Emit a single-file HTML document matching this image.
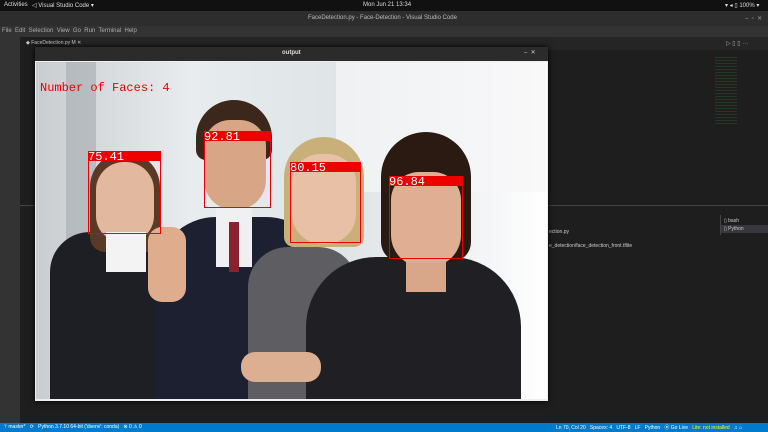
<!DOCTYPE html>
<html><head><style>
*{margin:0;padding:0;box-sizing:border-box}
body{width:768px;height:432px;overflow:hidden;background:#1e1e1e;font-family:"Liberation Sans",sans-serif;position:relative}
.a{position:absolute}
.t{font-size:6px;color:#ccc;white-space:nowrap}
.box{position:absolute;border:1.5px solid #e00}
.lab{position:absolute;left:-1px;top:-1px;right:-1px;height:10px;background:#e00;color:#fff;font-size:12px;line-height:12px;font-family:"Liberation Mono",monospace;padding-left:0}
</style></head><body>
<div class="a" style="left:0;top:0;width:768px;height:11px;background:#111"></div>
<div class="a t" style="left:4px;top:2px;color:#ddd">Activities</div>
<div class="a t" style="left:32px;top:2px;color:#ddd">◁ Visual Studio Code ▾</div>
<div class="a t" style="left:363px;top:2px;color:#ddd">Mon Jun 21 13:34</div>
<div class="a t" style="left:725px;top:2px;color:#ddd">▾ ◂ ▯ 100% ▾</div>
<div class="a" style="left:0;top:11px;width:768px;height:15px;background:#2d2d2d"></div>
<div class="a t" style="left:308px;top:15px;color:#bbb">FaceDetection.py - Face-Detection - Visual Studio Code</div>
<div class="a t" style="left:745px;top:15px;color:#999">–&nbsp;&nbsp;▫&nbsp;&nbsp;✕</div>
<div class="a" style="left:0;top:26px;width:768px;height:11px;background:#333"></div>
<div class="a t" style="left:2px;top:28px;color:#aaa">File&nbsp; Edit&nbsp; Selection&nbsp; View&nbsp; Go&nbsp; Run&nbsp; Terminal&nbsp; Help</div>
<div class="a" style="left:0;top:37px;width:20px;height:386px;background:#333"></div>
<div class="a" style="left:20px;top:37px;width:748px;height:13px;background:#252526"></div>
<div class="a" style="left:20px;top:37px;width:50px;height:13px;background:#1e1e1e"></div>
<div class="a t" style="left:26px;top:40px;font-size:5px">◆ FaceDetection.py M ✕</div>
<div class="a t" style="left:726px;top:40px;color:#aaa">▷ ▯ ▯ ···</div>
<div class="a" style="left:20px;top:205px;width:748px;height:1px;background:#444"></div>
<div class="a" style="left:720px;top:215px;width:48px;height:20px;border-left:1px solid #444"></div>
<div class="a t" style="left:724px;top:218px;font-size:5px">▯ bash</div>
<div class="a" style="left:721px;top:225px;width:47px;height:8px;background:#37373d"></div>
<div class="a t" style="left:724px;top:226px;font-size:5px">▯ Python</div>
<div class="a t" style="left:549px;top:229px;font-size:5px">ection.py</div>
<div class="a t" style="left:549px;top:243px;font-size:5px">e_detection/face_detection_front.tflite</div>
<div class="a" style="left:715px;top:55px;width:22px;height:70px;background:repeating-linear-gradient(#1e1e1e 0 2px,#2a4a2a 2px 3px);opacity:.6"></div>
<div class="a" style="left:0;top:423px;width:768px;height:9px;background:#007acc"></div>
<div class="a t" style="left:4px;top:424px;color:#fff;font-size:5px">ᛘ master*&nbsp;&nbsp;&nbsp;⟳&nbsp;&nbsp;&nbsp;Python 3.7.10 64-bit ('dsenv': conda)&nbsp;&nbsp;&nbsp;⊗ 0 ⚠ 0</div>
<div class="a t" style="left:556px;top:424px;color:#fff;font-size:5px">Ln 70, Col 20&nbsp;&nbsp;&nbsp;Spaces: 4&nbsp;&nbsp;&nbsp;UTF-8&nbsp;&nbsp;&nbsp;LF&nbsp;&nbsp;&nbsp;Python&nbsp;&nbsp;&nbsp;⦿ Go Live&nbsp;&nbsp;&nbsp;<span style="color:#ff0">Lite: not installed</span>&nbsp;&nbsp;&nbsp;♫ ⌂</div>
<div class="a" style="left:35px;top:47px;width:513px;height:354px;background:#eee;box-shadow:0 0 6px #000"></div>
<div class="a" style="left:35px;top:47px;width:513px;height:14px;background:#2b2b2b"></div>
<div class="a t" style="left:282px;top:50px;color:#ddd;font-weight:bold">output</div>
<div class="a t" style="left:524px;top:49px;color:#ccc">–&nbsp;&nbsp;✕</div>
<div class="a" style="left:36px;top:62px;width:511px;height:337px;overflow:hidden;background:linear-gradient(90deg,#c9cdd0,#e8ecee 30%,#dfe4e6 60%,#f1f3f4 85%,#fff)">
 <div class="a" style="left:30px;top:0;width:30px;height:337px;background:#9aa1a6;opacity:.5"></div>
 <div class="a" style="left:300px;top:0;width:210px;height:130px;background:#f6f7f8;opacity:.7"></div>
 <div class="a" style="left:14px;top:170px;width:120px;height:170px;background:#1e1f24;border-radius:40px 40px 0 0"></div>
 <div class="a" style="left:54px;top:90px;width:70px;height:100px;background:#5a3a26;border-radius:35px 35px 15px 15px"></div>
 <div class="a" style="left:60px;top:100px;width:58px;height:80px;background:#e2b89e;border-radius:28px 28px 26px 26px"></div>
 <div class="a" style="left:70px;top:170px;width:40px;height:40px;background:#f3f3f3"></div>
 <div class="a" style="left:120px;top:155px;width:170px;height:185px;background:#1c2030;border-radius:60px 60px 0 0"></div>
 <div class="a" style="left:160px;top:38px;width:76px;height:60px;background:#3b271b;border-radius:38px 38px 10px 10px"></div>
 <div class="a" style="left:168px;top:58px;width:62px;height:90px;background:#d9a587;border-radius:26px 26px 30px 30px"></div>
 <div class="a" style="left:180px;top:145px;width:36px;height:60px;background:#f0f0f2"></div>
 <div class="a" style="left:193px;top:160px;width:10px;height:50px;background:#8a2030"></div>
 <div class="a" style="left:112px;top:165px;width:38px;height:75px;background:#e0ac8e;border-radius:14px"></div>
 <div class="a" style="left:212px;top:185px;width:110px;height:155px;background:#5d5d62;border-radius:40px 40px 0 0"></div>
 <div class="a" style="left:248px;top:75px;width:80px;height:110px;background:#c9b07a;border-radius:40px 40px 10px 10px"></div>
 <div class="a" style="left:256px;top:92px;width:64px;height:90px;background:#e8c0a6;border-radius:28px 28px 30px 30px"></div>
 <div class="a" style="left:270px;top:195px;width:215px;height:145px;background:#202024;border-radius:70px 70px 0 0"></div>
 <div class="a" style="left:345px;top:70px;width:90px;height:130px;background:#2a1a12;border-radius:45px 45px 20px 20px"></div>
 <div class="a" style="left:355px;top:110px;width:70px;height:95px;background:#e0ae92;border-radius:28px 28px 32px 32px"></div>
 <div class="a" style="left:370px;top:200px;width:40px;height:30px;background:#d8a688"></div>
 <div class="a" style="left:205px;top:290px;width:80px;height:30px;background:#dcae92;border-radius:14px"></div>
</div>
<div class="a" style="left:40px;top:81px;color:#e00;font-size:12px;font-family:'Liberation Mono',monospace;white-space:nowrap">Number of Faces: 4</div>
<div class="box" style="left:88px;top:151px;width:73px;height:83px"><div class="lab">75.41</div></div>
<div class="box" style="left:204px;top:131px;width:67px;height:77px"><div class="lab">92.81</div></div>
<div class="box" style="left:290px;top:162px;width:71px;height:81px"><div class="lab">80.15</div></div>
<div class="box" style="left:389px;top:176px;width:74px;height:83px"><div class="lab">96.84</div></div>
</body></html>
